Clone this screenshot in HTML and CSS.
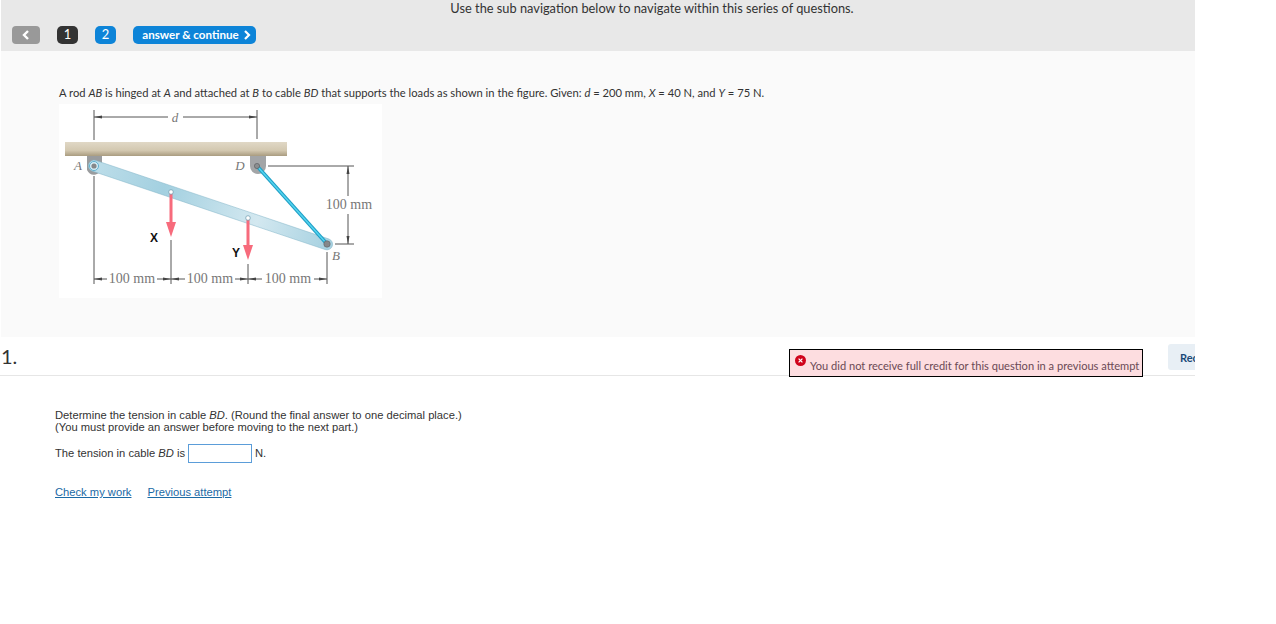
FILE: index.html
```html
<!DOCTYPE html>
<html lang="en">
<head>
    <meta charset="UTF-8">
    <title>Question 1</title>
    <link rel="stylesheet" href="styles.css">
</head>
<body>
    <div class="page">
        <!-- sub navigation -->
        <div class="subnav">
            <p class="subnav-hint">Use the sub navigation below to navigate within this series of questions.</p>
            <div class="subnav-row">
                <button class="back-btn">
                    <svg width="8" height="10" viewBox="0 0 8 10"><path d="M6 1 L2 5 L6 9" fill="none" stroke="#fff" stroke-width="2.4"/></svg>
                </button>
                <button class="num-btn num-current">1</button>
                <button class="num-btn">2</button>
                <button class="continue-btn">answer &amp; continue
                    <svg width="8" height="10" viewBox="0 0 8 10"><path d="M2 1 L6 5 L2 9" fill="none" stroke="#fff" stroke-width="2.2"/></svg>
                </button>
            </div>
        </div>

        <!-- problem statement -->
        <div class="stem">
            <p class="stem-text">A rod <i>AB</i> is hinged at <i>A</i> and attached at <i>B</i> to cable <i>BD</i> that supports the loads as shown in the figure. Given: <i>d</i> = 200 mm, <i>X</i> = 40 N, and <i>Y</i> = 75 N.</p>
            <svg class="figure" width="323" height="194" viewBox="59 104 323 194">
                <defs>
                    <linearGradient id="beam" x1="0" y1="0" x2="0" y2="1">
                        <stop offset="0" stop-color="#e0d8c6"/>
                        <stop offset="0.6" stop-color="#d3c8b0"/>
                        <stop offset="1" stop-color="#a99c80"/>
                    </linearGradient>
                    <linearGradient id="rod" gradientUnits="userSpaceOnUse" x1="94" y1="166" x2="327" y2="244">
                        <stop offset="0" stop-color="#bcdde9"/>
                        <stop offset="0.3" stop-color="#a3d0e0"/>
                        <stop offset="0.7" stop-color="#d3e8f0"/>
                        <stop offset="1" stop-color="#a8d2e1"/>
                    </linearGradient>
                </defs>
                <rect class="fig-bg" x="59" y="104" width="323" height="194"/>

                <!-- dimension lines -->
                <g class="dim">
                    <path d="M94 110 V140 M257 110 V139 M94 176 V284 M171 240 V284 M248 264 V284 M327 252 V284"/>
                    <path d="M94 117 H168 M183 117 H257"/>
                    <path d="M268 166 H354 M335 244 H354 M348 166 V196 M348 214 V244"/>
                    <path d="M94 279 H107 M157 279 H171 M171 279 H185 M235 279 H248 M248 279 H262 M314 279 H327"/>
                </g>
                <g class="dim-head">
                    <path d="M94 117 L102 115.5 V118.5 Z M257 117 L249 115.5 V118.5 Z"/>
                    <path d="M348 166 L346.5 174 H349.5 Z M348 244 L346.5 236 H349.5 Z"/>
                    <path d="M94 279 L102 277.5 V280.5 Z M171 279 L163 277.5 V280.5 Z M171 279 L179 277.5 V280.5 Z M248 279 L240 277.5 V280.5 Z M248 279 L256 277.5 V280.5 Z M327 279 L319 277.5 V280.5 Z"/>
                </g>

                <!-- ceiling and brackets -->
                <rect x="65" y="142" width="222" height="14" fill="url(#beam)"/>
                <path d="M87 156 H102 V166 A8 9 0 0 1 87 170 Z" fill="#9a9c9e"/>
                <path d="M250 156 H266 V166 A8 8 0 0 1 250 166 Z" fill="#a3a5a7"/>

                <!-- rod and cable -->
                <path d="M96 160.5 L329 239 A5.5 5.5 0 0 1 325 249.5 L92 171 A5.5 5.5 0 0 1 96 160.5 Z" fill="url(#rod)" stroke="#7fb3c6" stroke-width="0.5"/>
                <line x1="257" y1="166" x2="327" y2="244" stroke="#1f9fc6" stroke-width="3.6"/>
                <line x1="257" y1="166" x2="327" y2="244" stroke="#54d4f0" stroke-width="1.5"/>
                <circle cx="94" cy="166" r="4.5" fill="#d8eef6" stroke="#5fb0cf"/>
                <circle cx="94" cy="166" r="2.6" fill="#85888a"/>
                <circle cx="257" cy="166" r="2.6" fill="#8b8e90" stroke="#55585a" stroke-width="0.6"/>
                <circle cx="327" cy="244" r="3.2" fill="#85888a" stroke="#5c6064" stroke-width="0.6"/>

                <!-- loads -->
                <path class="load" d="M169.5 193 H172.5 V222 H176 L171 237 L166 222 H169.5 Z"/>
                <path class="load" d="M246.5 219 H249.5 V245 H253 L248 260 L243 245 H246.5 Z"/>
                <circle cx="171" cy="192" r="2.3" fill="#fff" stroke="#6c9aac" stroke-width="0.7"/>
                <circle cx="248" cy="218" r="2.3" fill="#fff" stroke="#6c9aac" stroke-width="0.7"/>

                <!-- labels -->
                <text class="fig-label" x="78" y="170" text-anchor="middle">A</text>
                <text class="fig-label" x="240" y="170" text-anchor="middle">D</text>
                <text class="fig-label" x="336" y="260" text-anchor="middle">B</text>
                <text class="fig-label" x="175" y="122" text-anchor="middle">d</text>
                <text class="fig-dim" x="132" y="283" text-anchor="middle">100 mm</text>
                <text class="fig-dim" x="210" y="283" text-anchor="middle">100 mm</text>
                <text class="fig-dim" x="288" y="283" text-anchor="middle">100 mm</text>
                <text class="fig-dim" x="349" y="209" text-anchor="middle">100 mm</text>
                <text class="fig-load" x="154" y="242" text-anchor="middle">X</text>
                <text class="fig-load" x="236" y="257" text-anchor="middle">Y</text>
            </svg>
        </div>

        <!-- question number + credit notice -->
        <div class="q-row">
            <span class="q-num">1.</span>
            <div class="notice">
                <svg class="notice-icon" width="11" height="11" viewBox="0 0 11 11">
                    <circle cx="5.5" cy="5.5" r="5.5" fill="#d0021b"/>
                    <path d="M3.6 3.6 L7.4 7.4 M7.4 3.6 L3.6 7.4" stroke="#fff" stroke-width="1.2"/>
                </svg>
                <span class="notice-text">You did not receive full credit for this question in a previous attempt</span>
            </div>
            <button class="side-btn">Record</button>
        </div>

        <!-- question part -->
        <div class="part">
            <p class="part-text">Determine the tension in cable <i>BD</i>. (Round the final answer to one decimal place.)<br>(You must provide an answer before moving to the next part.)</p>
            <div class="answer-line">
                <span>The tension in cable <i>BD</i> is</span>
                <input class="answer-input" type="text">
                <span>N.</span>
            </div>
            <div class="links">
                <a href="#">Check my work</a>
                <a href="#">Previous attempt</a>
            </div>
        </div>
    </div>
</body>
</html>
```

FILE: styles.css
```css
html, body {
    margin: 0;
    padding: 0;
    background: #fff;
}
.page {
    width: 1195px;
    height: 624px;
    overflow: hidden;
    font-family: "Liberation Sans", Arial, sans-serif;
    color: #333;
}
.subnav {
    background: #e8e8e8;
    margin-left: 1px;
    height: 51px;
    box-sizing: border-box;
    font-family: "Lato", sans-serif;
}
.subnav-hint {
    margin: 0;
    height: 26px;
    padding-top: 1px;
    box-sizing: border-box;
    text-align: center;
    font-size: 12.8px;
    line-height: 15px;
    padding-left: 108px;
}
.subnav-row {
    display: flex;
    align-items: center;
    height: 18px;
    padding-left: 11px;
}
button {
    border: none;
    padding: 0;
    font-family: "Lato", sans-serif;
    color: #fff;
}
.back-btn {
    width: 28px;
    height: 18px;
    background: #999;
    border-radius: 4px;
    display: flex;
    align-items: center;
    justify-content: center;
    margin-right: 17px;
}
.num-btn {
    width: 21px;
    height: 18px;
    background: #0d84d8;
    border-radius: 5px;
    font-size: 13px;
    padding-bottom: 2px;
    margin-right: 17px;
}
.num-current {
    background: #333;
}
.continue-btn {
    width: 123px;
    height: 18px;
    background: #0d84d8;
    border-radius: 5px;
    font-size: 11.6px;
    font-weight: 700;
    display: flex;
    align-items: center;
    justify-content: center;
    gap: 4px;
    padding: 0 0 1px 4px;
    box-sizing: border-box;
}
.stem {
    background: #fafafa;
    margin-left: 1px;
    height: 286px;
    box-sizing: border-box;
    padding: 35px 0 0 58px;
    font-family: "Lato", sans-serif;
}
.stem-text {
    margin: 0 0 4px;
    font-size: 11.2px;
    line-height: 14px;
}
.figure {
    display: block;
}
.fig-bg {
    fill: #fff;
}
.dim path {
    fill: none;
    stroke: #555;
    stroke-width: 1;
}
.dim-head path {
    fill: #444;
}
.load {
    fill: #f76b7c;
}
.fig-label {
    font-family: "Liberation Serif", serif;
    font-style: italic;
    font-size: 13px;
    fill: #777;
}
.fig-dim {
    font-family: "Liberation Serif", serif;
    font-size: 14px;
    fill: #777;
}
.fig-load {
    font-family: "Liberation Sans", sans-serif;
    font-weight: 700;
    font-size: 12px;
    fill: #111;
}
.q-row {
    display: flex;
    align-items: flex-start;
    height: 38px;
    border-bottom: 1px solid #e6e6e6;
}
.q-num {
    font-family: "Lato", sans-serif;
    font-size: 20px;
    line-height: 26px;
    margin: 6px 0 0 1px;
}
.notice {
    margin: 12px 0 0 auto;
    width: 354px;
    height: 28px;
    box-sizing: border-box;
    border: 1px solid #000;
    background: #fddde0;
    position: relative;
    font-family: "Lato", sans-serif;
    font-size: 11.1px;
    line-height: 14px;
    color: #6b4a55;
    padding: 9px 0 0 20px;
    white-space: nowrap;
}
.notice-icon {
    position: absolute;
    left: 5px;
    top: 5px;
}
.side-btn {
    flex-shrink: 0;
    margin: 7px -43px 0 25px;
    width: 70px;
    height: 26px;
    background: #e8eff5;
    border-radius: 3px;
    color: #1a4a78;
    font-size: 11px;
    font-weight: 700;
    text-align: left;
    padding-left: 12px;
}
.part {
    padding: 33px 0 0 55px;
    font-size: 11.2px;
}
.part-text {
    margin: 0 0 11px;
    line-height: 12px;
}
.answer-line {
    display: flex;
    align-items: center;
    gap: 3px;
    height: 18px;
}
.answer-input {
    width: 64px;
    height: 19px;
    box-sizing: border-box;
    border: 1.5px solid #5b9dd9;
    background: #fff;
    padding: 0;
    margin: 0;
}
.links {
    display: flex;
    gap: 16px;
    margin-top: 24px;
}
.links a {
    color: #1b6aa5;
    text-decoration: underline;
}
```
